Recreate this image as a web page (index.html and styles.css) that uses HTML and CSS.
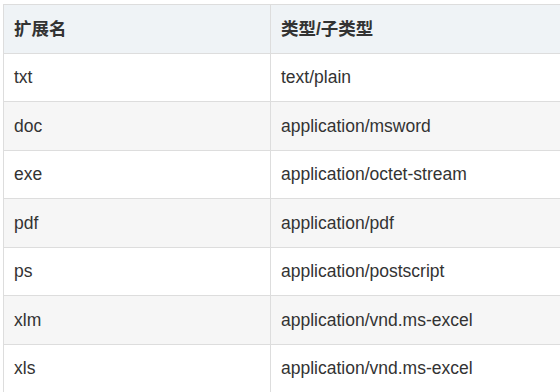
FILE: index.html
```html
<!DOCTYPE html>
<html>
<head>
    <title>MIME 类型</title>
    <link rel="stylesheet" href="styles.css">
</head>
<body>
    <table class="mime-table">
        <thead>
            <tr>
                <th class="col-ext">扩展名</th>
                <th>类型/子类型</th>
            </tr>
        </thead>
        <tbody>
            <tr><td>txt</td><td>text/plain</td></tr>
            <tr><td>doc</td><td>application/msword</td></tr>
            <tr><td>exe</td><td>application/octet-stream</td></tr>
            <tr><td>pdf</td><td>application/pdf</td></tr>
            <tr><td>ps</td><td>application/postscript</td></tr>
            <tr><td>xlm</td><td>application/vnd.ms-excel</td></tr>
            <tr><td>xls</td><td>application/vnd.ms-excel</td></tr>
        </tbody>
    </table>
</body>
</html>
```

FILE: styles.css
```css
body {
    margin: 0;
    padding: 4px 0 0 3px;
    font-family: "Liberation Sans", Arial, "Noto Sans CJK SC", sans-serif;
    color: #333;
    overflow: hidden;
}
.mime-table {
    border-collapse: collapse;
    width: 620px;
    font-size: 17.5px;
}
.mime-table th,
.mime-table td {
    border: 1px solid #ddd;
    padding: 11.75px 10px;
    line-height: 24px;
    text-align: left;
}
.mime-table th {
    background-color: #eff3f6;
    font-weight: bold;
}
.col-ext {
    width: 246px;
}
.mime-table tbody tr:nth-child(even) {
    background-color: #f6f6f6;
}
```
